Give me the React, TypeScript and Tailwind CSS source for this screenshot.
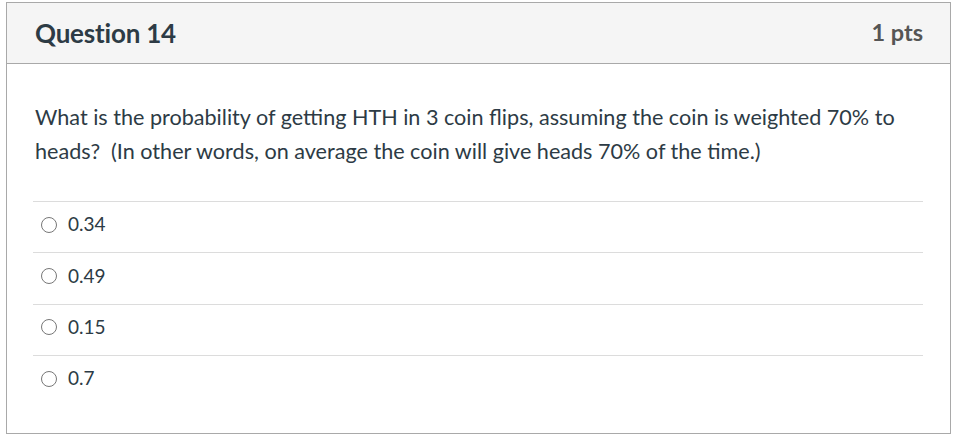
const OPTIONS = ["0.34", "0.49", "0.15", "0.7"];

export default function App() {
  return (
    <div
      className="w-[977px] h-[439px] bg-white pl-[6px] pt-[2px]"
      style={{ fontFamily: "Lato, 'Liberation Sans', sans-serif" }}
    >
      <div className="w-[945px] h-[432px] border border-[#a9a9a9] flex flex-col">
        {/* Header */}
        <div className="h-[61px] shrink-0 bg-[#f5f5f5] border-b border-[#a9a9a9] flex items-center justify-between pl-[28px] pr-[27px]">
          <h2 className="text-[26px] font-bold text-[#2d3b45] tracking-[-0.2px]">Question 14</h2>
          <span className="text-[23.5px] font-bold text-[#555]">1 pts</span>
        </div>

        {/* Body */}
        <div className="pt-[36px] px-[28px]">
          <p className="text-[21.6px] leading-[34px] text-[#2d3b45]">
            What is the probability of getting HTH in 3 coin flips, assuming the coin is weighted 70% to
            heads?&nbsp; (In other words, on average the coin will give heads 70% of the time.)
          </p>
        </div>

        <div className="mt-[33px] ml-[26px] mr-[27px]">
          {OPTIONS.map(o => (
            <label
              key={o}
              className="h-[51.3px] border-t border-[#dcdcdc] flex items-center gap-[11px] pl-[8px] pb-[5px]"
            >
              <span className="w-[16px] h-[16px] rounded-full border border-[#777] bg-white shrink-0" />
              <span className="text-[19px] text-[#2d3b45]">{o}</span>
            </label>
          ))}
        </div>
      </div>
    </div>
  );
}
